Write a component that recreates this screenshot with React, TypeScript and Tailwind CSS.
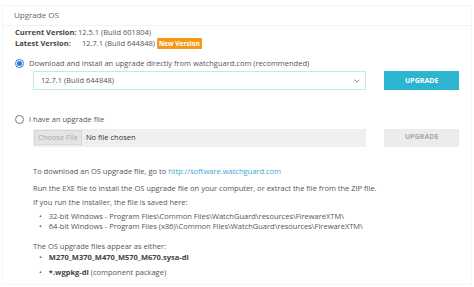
import { ChevronDown } from "lucide-react";

const font = { fontFamily: '"Open Sans", "Liberation Sans", sans-serif' };

function Radio({ checked }: { checked: boolean }) {
  return checked ? (
    <span className="flex h-[9px] w-[9px] items-center justify-center rounded-full border border-[#2a7be4] bg-white">
      <span className="h-[5px] w-[5px] rounded-full bg-[#2a7be4]" />
    </span>
  ) : (
    <span className="h-[9px] w-[9px] rounded-full border border-[#777] bg-white" />
  );
}

export default function App() {
  return (
    <div
      className="h-[287px] w-[474px] overflow-hidden bg-white text-[7.5px] text-[#555]"
      style={font}
    >
      <div className="mx-[2px] mt-[5px] h-[280px] border border-[#f6f6f6]">
        {/* header */}
        <div className="border-b border-[#f3f3f3] px-[11px] pt-[3px] pb-[4px] text-[8px] text-[#666]">
          Upgrade OS
        </div>

        <div className="px-[12px] pt-[1px]">
          {/* versions */}
          <div className="flex flex-col leading-[11px]">
            <div className="flex items-center whitespace-nowrap">
              <span className="w-[63px] shrink-0 font-bold text-[#444]">Current Version:</span>
              <span>12.5.1 (Build 601804)</span>
            </div>
            <div className="flex items-center whitespace-nowrap">
              <span className="w-[67px] shrink-0 font-bold text-[#444]">Latest Version:</span>
              <span>12.7.1 (Build 644848)</span>
              <span className="ml-[2px] rounded-[1px] bg-[#f39a1a] px-[2px] py-[1px] text-[6.5px] font-bold leading-[9px] text-white">
                New Version
              </span>
            </div>
          </div>

          {/* option 1 */}
          <div className="mt-[9px] flex items-center gap-[5px]">
            <Radio checked />
            <span>Download and install an upgrade directly from watchguard.com (recommended)</span>
          </div>
          <div className="mt-[2px] flex items-center gap-[18px] pl-[18px]">
            <div className="flex h-[19px] w-[335px] items-center justify-between border border-[#bfe8f0] pl-[7px] pr-[4px] text-[#555]">
              <span>12.7.1 (Build 644848)</span>
              <ChevronDown size={8} strokeWidth={2.5} className="text-[#777]" />
            </div>
            <button className="h-[19px] w-[75px] bg-[#2db5cf] text-[7px] font-bold text-white">
              UPGRADE
            </button>
          </div>

          {/* option 2 */}
          <div className="mt-[24px] flex items-center gap-[5px]">
            <Radio checked={false} />
            <span>I have an upgrade file</span>
          </div>
          <div className="mt-[3px] flex items-center gap-[18px] pl-[18px]">
            <div className="flex h-[18px] w-[335px] items-center bg-[#efefef] pl-[1px]">
              <span className="flex h-[15px] items-center border border-[#d8d8d8] bg-[#e4e4e4] px-[3px] text-[#aaa]">
                Choose File
              </span>
              <span className="ml-[4px] text-[#333]">No file chosen</span>
            </div>
            <button className="h-[18px] w-[75px] bg-[#ececec] text-[7px] font-bold text-[#aaa]">
              UPGRADE
            </button>
          </div>

          {/* help text */}
          <div className="mt-[19px] pl-[18px] leading-[10px]">
            <p>
              To download an OS upgrade file, go to{" "}
              <span className="text-[#3aa7d4]">http://software.watchguard.com</span>
            </p>
            <p className="mt-[7px]">
              Run the EXE file to install the OS upgrade file on your computer, or extract the file from the ZIP file.
            </p>
            <p className="mt-[4px]">If you run the installer, the file is saved here:</p>
            <ul className="mt-[4px] pl-[6px]">
              <li className="flex gap-[7px]">
                <span>•</span>
                <span>32-bit Windows - Program Files\Common Files\WatchGuard\resources\FirewareXTM\</span>
              </li>
              <li className="flex gap-[7px]">
                <span>•</span>
                <span>64-bit Windows - Program Files (x86)\Common Files\WatchGuard\resources\FirewareXTM\</span>
              </li>
            </ul>
            <p className="mt-[10px]">The OS upgrade files appear as either:</p>
            <ul className="mt-[1px] pl-[6px]">
              <li className="flex gap-[7px]">
                <span>•</span>
                <span className="font-bold text-[#444]">M270_M370_M470_M570_M670.sysa-dl</span>
              </li>
              <li className="mt-[5px] flex gap-[7px]">
                <span>•</span>
                <span>
                  <span className="font-bold text-[#444]">*.wgpkg-dl</span> (component package)
                </span>
              </li>
            </ul>
          </div>
        </div>
      </div>
    </div>
  );
}
